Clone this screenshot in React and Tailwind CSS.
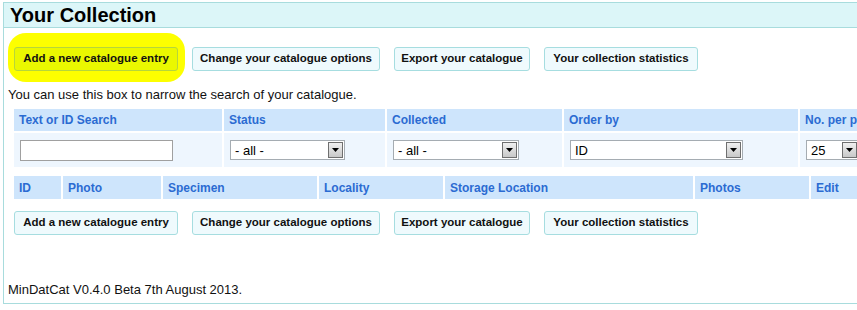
const BUTTONS = [
  { label: "Add a new catalogue entry", w: "w-[164px]" },
  { label: "Change your catalogue options", w: "w-[188px]" },
  { label: "Export your catalogue", w: "w-[136px]" },
  { label: "Your collection statistics", w: "w-[154px]" },
];

const FILTERS = [
  { label: "Text or ID Search", w: "w-[208px]" },
  { label: "Status", w: "w-[161px]" },
  { label: "Collected", w: "w-[175px]" },
  { label: "Order by", w: "w-[234px]" },
  { label: "No. per page", w: "w-[100px]" },
];

const COLUMNS = [
  { label: "ID", w: "w-[47px]" },
  { label: "Photo", w: "w-[98px]" },
  { label: "Specimen", w: "w-[154px]" },
  { label: "Locality", w: "w-[124px]" },
  { label: "Storage Location", w: "w-[248px]" },
  { label: "Photos", w: "w-[114px]" },
  { label: "Edit", w: "w-[100px]" },
];

function Button({ label, w, highlight }) {
  return (
    <div className="relative">
      {highlight && (
        <div className="absolute -left-[6px] -right-[7px] -top-[14px] -bottom-[11px] rounded-[18px] bg-[#fdff00]" />
      )}
      <div
        className={`relative ${w} h-[24px] flex items-center justify-center rounded-[3px] border text-[11.5px] font-bold text-[#111] ${
          highlight ? "bg-[#eaf800] border-[#b6d63c]" : "bg-[#effafd] border-[#a6dde0]"
        }`}
      >
        {label}
      </div>
    </div>
  );
}

function ButtonRow({ highlightFirst }) {
  return (
    <div className="flex gap-[14px] pl-[10px]">
      {BUTTONS.map((b, i) => (
        <Button key={b.label} {...b} highlight={highlightFirst && i === 0} />
      ))}
    </div>
  );
}

function Select({ value, w }) {
  return (
    <div className={`${w} h-[20px] shrink-0 flex items-center justify-between border border-[#a5acb2] bg-white pl-[4px] pr-[1px]`}>
      <span className="text-[13px] leading-none text-black">{value}</span>
      <div className="w-[15px] h-[16px] flex items-center justify-center border border-[#6f6f6f] bg-gradient-to-b from-[#f0f0f0] to-[#c8c8c8]">
        <svg width="7" height="4" viewBox="0 0 7 4">
          <path d="M0 0h7L3.5 4z" fill="#000" />
        </svg>
      </div>
    </div>
  );
}

function HeaderCell({ label, w }) {
  return (
    <div className={`${w} shrink-0 h-full flex items-center pl-[5px] bg-[#cee5fc] text-[12px] font-bold text-[#2b6bd2] whitespace-nowrap overflow-hidden`}>
      {label}
    </div>
  );
}

export default function App() {
  return (
    <div className="w-[857px] h-[310px] overflow-hidden bg-white pt-[2px] pl-[3px] font-['Liberation_Sans',Arial,sans-serif] text-black">
      <div className="w-[1000px] h-[302px] border-l border-b border-[#a8dcdd]">
        <div className="h-[26px] border-t border-b border-[#a8dcdd] bg-[#dcf6f8] pl-[6px] text-[20px] font-bold leading-[24px]">
          Your Collection
        </div>

        <div className="mt-[19px]">
          <ButtonRow highlightFirst />
        </div>

        <p className="mt-[16px] pl-[4px] text-[13px] leading-[15px] text-[#111]">
          You can use this box to narrow the search of your catalogue.
        </p>

        <div className="mt-[7px] pl-[10px] flex flex-col gap-[2px]">
          <div className="h-[22px] flex gap-[2px]">
            {FILTERS.map((f) => (
              <HeaderCell key={f.label} {...f} />
            ))}
          </div>
          <div className="h-[34px] flex gap-[2px]">
            <div className="w-[208px] shrink-0 h-full flex items-center pl-[6px] bg-[#eef6fe]">
              <div className="w-[153px] h-[21px] border border-[#a0a0a0] bg-white" />
            </div>
            <div className="w-[161px] shrink-0 h-full flex items-center pl-[6px] bg-[#eef6fe]">
              <Select value="- all -" w="w-[115px]" />
            </div>
            <div className="w-[175px] shrink-0 h-full flex items-center pl-[6px] bg-[#eef6fe]">
              <Select value="- all -" w="w-[126px]" />
            </div>
            <div className="w-[234px] shrink-0 h-full flex items-center pl-[6px] bg-[#eef6fe]">
              <Select value="ID" w="w-[173px]" />
            </div>
            <div className="w-[100px] shrink-0 h-full flex items-center pl-[6px] bg-[#eef6fe]">
              <Select value="25" w="w-[53px]" />
            </div>
          </div>
        </div>

        <div className="mt-[9px] pl-[10px] h-[23px] flex gap-[2px]">
          {COLUMNS.map((c) => (
            <HeaderCell key={c.label} {...c} />
          ))}
        </div>

        <div className="mt-[12px]">
          <ButtonRow />
        </div>

        <p className="mt-[47px] pl-[4px] text-[13px] leading-[15px] text-[#111]">
          MinDatCat V0.4.0 Beta 7th August 2013.
        </p>
      </div>
    </div>
  );
}
